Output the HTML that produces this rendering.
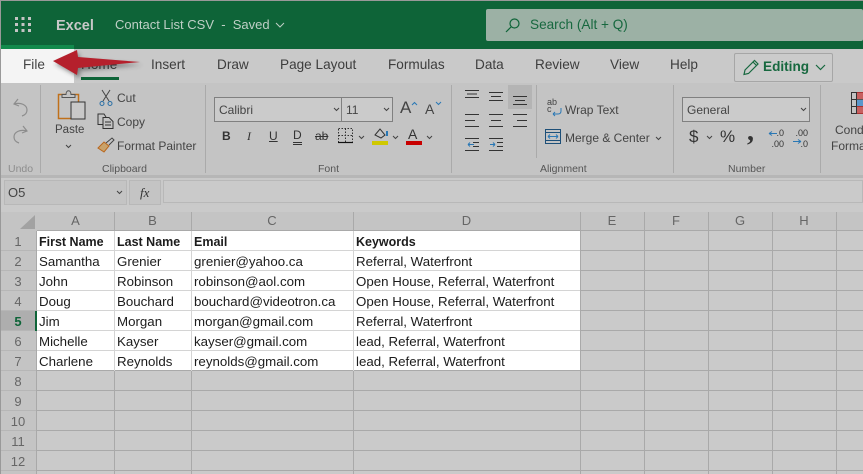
<!DOCTYPE html>
<html><head><meta charset="utf-8"><style>
html,body{margin:0;padding:0}
#p{position:relative;width:863px;height:474px;overflow:hidden;background:#cacaca;font-family:"Liberation Sans",sans-serif;color:#3c3c3c;font-size:12px}
#p div,#p span.a{position:absolute}
.t{position:absolute;white-space:nowrap;line-height:16px}
.tab{font-size:13.6px;top:57px;color:#3d3d3d}
.r{font-size:12px;color:#444}
.g{font-size:10.5px;color:#555;top:161px}
.c{font-size:13.3px;color:#1c1c1c;white-space:nowrap;position:absolute;line-height:20px;margin-top:1px}
.h{font-size:13px;color:#666;position:absolute;text-align:center;line-height:20px}
.n{margin-top:1px}
svg{position:absolute;overflow:visible}
</style></head><body><div id="p">
<div style="left:0;top:0;width:863px;height:1px;background:#999"></div>
<div style="left:0;top:1px;width:1px;height:473px;background:#999;z-index:9"></div>
<div style="left:1px;top:1px;width:862px;height:48px;background:#0e6438"></div>
<svg style="left:15px;top:17px" width="18" height="16" fill="#c4c4c4"><g id="d"><rect x="0" y="0" width="3" height="3"/><rect x="6.500" y="0" width="3" height="3"/><rect x="13" y="0" width="3" height="3"/><rect x="0" y="6" width="3" height="3"/><rect x="6.500" y="6" width="3" height="3"/><rect x="13" y="6" width="3" height="3"/><rect x="0" y="12" width="3" height="3"/><rect x="6.500" y="12" width="3" height="3"/><rect x="13" y="12" width="3" height="3"/></g></svg>
<span class="t" style="left:56px;top:18px;font-size:14.5px;font-weight:bold;color:#c8c8c8">Excel</span>
<span class="t" style="left:115px;top:17px;font-size:13px;color:#bfcfc6">Contact List CSV&nbsp; -&nbsp; Saved</span>
<svg style="left:275px;top:22px" width="10" height="7" fill="none" stroke="#bfcfc6"><path d="M1 1l4 4 4-4"/></svg>
<div style="left:486px;top:9px;width:377px;height:32px;background:#9cb1a5;border-radius:2px"></div>
<svg style="left:505px;top:17px" width="16" height="16" fill="none" stroke="#0e6438" stroke-width="1.200"><circle cx="9.500" cy="6.500" r="4.500"/><path d="M6 10l-5 5"/></svg>
<span class="t" style="left:530px;top:17px;font-size:13.6px;color:#17683f">Search (Alt + Q)</span>

<div style="left:1px;top:49px;width:862px;height:34px;background:#c9c9c9"></div>
<div style="left:1px;top:45px;width:73px;height:4px;background:#128a4c"></div>
<div style="left:1px;top:49px;width:73px;height:34px;background:#f4f4f4"></div>
<span class="t tab" style="left:23px;color:#444">File</span>
<span class="t tab" style="left:81px;color:#333">Home</span>
<div style="left:81px;top:77px;width:38px;height:3px;background:#0e6438"></div>
<span class="t tab" style="left:151px">Insert</span>
<span class="t tab" style="left:217px">Draw</span>
<span class="t tab" style="left:280px">Page Layout</span>
<span class="t tab" style="left:388px">Formulas</span>
<span class="t tab" style="left:475px">Data</span>
<span class="t tab" style="left:535px">Review</span>
<span class="t tab" style="left:610px">View</span>
<span class="t tab" style="left:670px">Help</span>
<div style="left:734px;top:53px;width:97px;height:27px;border:1px solid #a6a6a6;border-radius:2px;background:#cbcbcb"></div>
<svg style="left:743px;top:59px" width="17" height="17" fill="none" stroke="#17683f" stroke-width="1.200"><path d="M1 15.500l1-4.500L11.500 1.500l3.500 3.500L5.500 14.500zM10 3l3.500 3.500"/></svg>
<span class="t" style="left:763px;top:59px;font-size:13.6px;font-weight:bold;color:#17683f">Editing</span>
<svg style="left:815px;top:64px" width="11" height="7" fill="none" stroke="#17683f" stroke-width="1.200"><path d="M1 1l4.500 4.500L10 1"/></svg>

<div style="left:1px;top:83px;width:862px;height:92px;background:#c4c4c4"></div>
<div style="left:1px;top:175px;width:862px;height:3px;background:#b6b6b6"></div>
<div style="left:1px;top:178px;width:862px;height:27px;background:#c9c9c9"></div>
<div style="left:40px;top:85px;width:1px;height:88px;background:#aaa"></div>
<div style="left:205px;top:85px;width:1px;height:88px;background:#aaa"></div>
<div style="left:451px;top:85px;width:1px;height:88px;background:#aaa"></div>
<div style="left:536px;top:85px;width:1px;height:73px;background:#aaa"></div>
<div style="left:673px;top:85px;width:1px;height:88px;background:#aaa"></div>
<div style="left:820px;top:85px;width:1px;height:88px;background:#aaa"></div>

<svg style="left:12px;top:98px" width="18" height="50" fill="none" stroke="#8d8d8d" stroke-width="1.200"><path d="M6 1L2 6l5 2M2 6c7-2 13 1 13 6 0 3-2 5-5 6"/><path d="M11 28l4 5-5 2M15 33c-7-2-13 1-13 6 0 3 2 5 5 6"/></svg>
<span class="t g" style="left:8px;color:#8d8d8d">Undo</span>

<svg style="left:57px;top:89px" width="30" height="32" fill="none"><path d="M1.500 5.500h20v24H1.500z" stroke="#c0701a" stroke-width="1.500"/><path d="M5 5.500h4c0-5 5-5 5 0h4v3H5z" fill="#c4c4c4" stroke="#555"/><path d="M14 13h14v17H14z" fill="#c8c8c8" stroke="#333"/></svg>
<span class="t r" style="left:55px;top:122px;font-size:11.5px">Paste</span>
<svg style="left:65px;top:144px" width="7" height="5" fill="none" stroke="#444"><path d="M1 1l2.500 2.500L6 1"/></svg>
<svg style="left:99px;top:89px" width="14" height="18" fill="none" stroke="#444"><path d="M3 1l7 11M11 1L4 12"/><circle cx="3" cy="14.500" r="2" stroke="#2a6fa5"/><circle cx="11" cy="14.500" r="2" stroke="#2a6fa5"/></svg>
<span class="t r" style="left:117px;top:90px">Cut</span>
<svg style="left:97px;top:113px" width="18" height="16" fill="none" stroke="#333"><path d="M6 11.500H1V1h6l2 3"/><path d="M6 4.500h6l4 4v7H6zM8 9h6M8 12h6"/></svg>
<span class="t r" style="left:117px;top:114px">Copy</span>
<svg style="left:97px;top:137px" width="18" height="16" fill="none"><path d="M1 11l6-6 5 4-5 6z" fill="#c9a26a" stroke="#b9661c"/><path d="M9 6l6-5 2 2-5 5" stroke="#444"/></svg>
<span class="t r" style="left:117px;top:138px">Format Painter</span>
<span class="t g" style="left:102px">Clipboard</span>

<div style="left:214px;top:97px;width:177px;height:23px;border:1px solid #808080;background:#cbcbcb"></div>
<div style="left:341px;top:97px;width:1px;height:24px;background:#808080"></div>
<span class="t r" style="left:219px;top:102px">Calibri</span>
<span class="t r" style="left:346px;top:102px">11</span>
<svg style="left:333px;top:107px" width="60" height="6" fill="none" stroke="#444"><path d="M1 1l2.500 2.500L6 1M51 1l2.500 2.500L56 1"/></svg>
<span class="t" style="left:400px;top:100px;font-size:17px;color:#444">A</span>
<span class="t" style="left:425px;top:101px;font-size:14px;color:#444">A</span>
<svg style="left:411px;top:101px" width="30" height="6" fill="none" stroke="#2a78b5"><path d="M1 4l2.500-2.500L6 4M25 1l2.500 2.500L30 1"/></svg>
<span class="t" style="left:222px;top:128px;font-weight:bold;color:#333">B</span>
<span class="t" style="left:247px;top:128px;font-family:'Liberation Serif',serif;font-style:italic;color:#333">I</span>
<span class="t" style="left:269px;top:128px;text-decoration:underline;color:#333">U</span>
<span class="t" style="left:293px;top:128px;color:#333;border-bottom:3px double #333;line-height:14px">D</span>
<span class="t" style="left:315px;top:128px;text-decoration:line-through;color:#333">ab</span>
<svg style="left:338px;top:128px" width="15" height="16" fill="none" stroke="#333"><path d="M.5.5h14v14H.5zM7.500.5v14M.5 7.500h14" stroke-dasharray="1.500 1.500"/><path d="M0 14.500h15" stroke="#111" stroke-width="1.200"/></svg>
<svg style="left:358px;top:135px" width="8" height="5" fill="none" stroke="#444"><path d="M1 1l2.500 2.500L6 1"/></svg>
<svg style="left:374px;top:128px" width="15" height="12" fill="none" stroke="#333"><path d="M1 7l5-6 5 6-4 3z"/><path d="M13 3v5" stroke="#2a78b5" stroke-width="2"/></svg>
<div style="left:372px;top:141px;width:16px;height:4px;background:#cfc800"></div>
<svg style="left:392px;top:135px" width="8" height="5" fill="none" stroke="#444"><path d="M1 1l2.500 2.500L6 1"/></svg>
<span class="t" style="left:408px;top:126px;font-size:14px;color:#333">A</span>
<div style="left:406px;top:141px;width:16px;height:4px;background:#c80000"></div>
<svg style="left:426px;top:135px" width="8" height="5" fill="none" stroke="#444"><path d="M1 1l2.500 2.500L6 1"/></svg>
<span class="t g" style="left:318px">Font</span>

<div style="left:508px;top:85px;width:24px;height:24px;background:#b4b4b4"></div>
<svg style="left:465px;top:90px" width="62" height="66" fill="none" stroke="#333"><path d="M0 .5h14M2 4h10M0 7.500h14M24 2.500h14M26 6.500h10M24 10.500h14M48 6.500h14M50 10.500h10M48 14.500h14M0 24.500h14M0 30.500h10M0 36.500h14M24 24.500h14M26 30.500h10M24 36.500h14M48 24.500h14M52 30.500h10M48 36.500h14M0 48.500h14M8 52.500h6M8 56.500h6M0 60.500h14M24 48.500h14M32 52.500h6M32 56.500h6M24 60.500h14"/><path d="M3 54.500h6M3 54.500l2-2M3 54.500l2 2M25 54.500h5M30 54.500l-2-2M30 54.500l-2 2" stroke="#2a78b5"/></svg>
<span class="t g" style="left:540px;color:#555">Alignment</span>

<svg style="left:547px;top:100px" width="16" height="18" fill="none" stroke="#2a78b5"><path d="M14 8v3c0 2-1 3-3 3H6M6 14l2-2M6 14l2 2"/></svg>
<span class="t" style="left:547px;top:99px;font-size:9px;line-height:7px;color:#444;white-space:normal;width:12px">ab<br>c</span>
<span class="t r" style="left:565px;top:102px">Wrap Text</span>
<svg style="left:545px;top:129px" width="16" height="15" fill="none" stroke="#1d4f78"><path d="M.5.500h15v14H.5zM.5 3.500h15M.5 11.500h15"/><path d="M3 7.500h10M3 7.500l2-2M3 7.500l2 2M13 7.500l-2-2M13 7.500l-2 2" stroke="#2a78b5"/></svg>
<span class="t r" style="left:565px;top:130px">Merge &amp; Center</span>
<svg style="left:655px;top:136px" width="8" height="5" fill="none" stroke="#444"><path d="M1 1l2.500 2.500L6 1"/></svg>

<div style="left:682px;top:97px;width:126px;height:23px;border:1px solid #808080;background:#cbcbcb"></div>
<span class="t r" style="left:687px;top:102px">General</span>
<svg style="left:800px;top:107px" width="8" height="5" fill="none" stroke="#444"><path d="M1 1l2.500 2.500L6 1"/></svg>
<span class="t" style="left:689px;top:129px;font-size:17px;color:#333">$</span>
<svg style="left:706px;top:135px" width="8" height="5" fill="none" stroke="#444"><path d="M1 1l2.500 2.500L6 1"/></svg>
<span class="t" style="left:720px;top:129px;font-size:17px;color:#333">%</span>
<span class="t" style="left:747px;top:124px;font-size:28px;font-weight:bold;color:#333;font-family:'Liberation Serif',serif">,</span>
<span class="t" style="left:769px;top:128px;font-size:9px;line-height:11px;color:#333;text-align:right;width:15px">.0<br>.00</span>
<span class="t" style="left:794px;top:128px;font-size:9px;line-height:11px;color:#333;text-align:right;width:14px">.00<br>.0</span>
<svg style="left:768px;top:131px" width="44" height="14" fill="none" stroke="#2a78b5"><path d="M1 2.500h8M1 2.500l3-2M1 2.500l3 2M25 10.500h8M33 10.500l-3-2M33 10.500l-3 2"/></svg>
<span class="t g" style="left:728px">Number</span>

<svg style="left:851px;top:92px" width="12" height="22" fill="none" stroke="#333"><rect x="5.500" y=".500" width="7" height="21" fill="#c9c9c9"/><rect x="5.500" y=".500" width="7" height="7" fill="#c86060" stroke="#a33"/><rect x="5.500" y="7.500" width="7" height="7" fill="#5a97cc" stroke="#555"/><rect x="5.500" y="14.500" width="7" height="7" fill="#c86060" stroke="#a33"/><path d="M.5.500h5v21h-5zM.5 7.500h5M.5 14.500h5"/></svg>
<span class="t r" style="left:835px;top:122px">Cond</span>
<span class="t r" style="left:831px;top:138px">Forma</span>

<div style="left:4px;top:180px;width:121px;height:23px;background:#c4c4c4;border:1px solid #b8b8b8"></div>
<span class="t" style="left:8px;top:185px;font-size:13px;color:#444">O5</span>
<svg style="left:116px;top:190px" width="8" height="5" fill="none" stroke="#444"><path d="M1 1l2.500 2.500L6 1"/></svg>
<div style="left:129px;top:180px;width:30px;height:23px;background:#c4c4c4;border:1px solid #b8b8b8"></div>
<span class="t" style="left:140px;top:185px;font-size:13px;font-style:italic;font-family:'Liberation Serif',serif;color:#333">fx</span>
<div style="left:163px;top:180px;width:700px;height:23px;background:#cacaca;border:1px solid #b8b8b8;box-sizing:border-box"></div>

<div style="left:1px;top:212px;width:862px;height:19px;background:#c4c4c4"></div>
<div style="left:1px;top:231px;width:36px;height:243px;background:#c4c4c4"></div>
<svg style="left:18px;top:212px" width="18" height="18"><path d="M17 3v14H2z" fill="#a2a2a2"/></svg>

<div style="left:37px;top:231px;width:543px;height:140px;background:#fff"></div>

<svg style="left:0;top:0" width="863" height="474" shape-rendering="crispEdges">
<g stroke="#a9a9a9" fill="none">
<path d="M36.500 231v243M114.500 212v19M191.500 212v19M353.500 212v19M580.500 212v262M644.500 212v262M708.500 212v262M772.500 212v262M836.500 212v262M114.500 371v103M191.500 371v103M353.500 371v103"/>
<path d="M37 230.500h826M37 370.500h826M37 390.500h826M37 410.500h826M37 430.500h826M37 450.500h826M37 470.500h826M580 250.500h283M580 270.500h283M580 290.500h283M580 310.500h283M580 330.500h283M580 350.500h283"/>
</g>
<g stroke="#d4d4d4" fill="none">
<path d="M114.500 231v140M191.500 231v140M353.500 231v140M37 250.500h543M37 270.500h543M37 290.500h543M37 310.500h543M37 330.500h543M37 350.500h543"/>
</g>
<g stroke="#b6b6b6" fill="none"><path d="M1 250.500h35M1 270.500h35M1 290.500h35M1 310.500h35M1 330.500h35M1 350.500h35M1 370.500h35M1 390.500h35M1 410.500h35M1 430.500h35M1 450.500h35M1 470.500h35"/></g>
</svg>
<div style="left:1px;top:311px;width:35px;height:19px;background:#aeaeae"></div>
<div style="left:35px;top:311px;width:2px;height:20px;background:#0e6438"></div>

<span class="h" style="left:37px;top:211px;width:77px">A</span>
<span class="h" style="left:114px;top:211px;width:77px">B</span>
<span class="h" style="left:191px;top:211px;width:162px">C</span>
<span class="h" style="left:353px;top:211px;width:227px">D</span>
<span class="h" style="left:580px;top:211px;width:64px">E</span>
<span class="h" style="left:644px;top:211px;width:64px">F</span>
<span class="h" style="left:708px;top:211px;width:64px">G</span>
<span class="h" style="left:772px;top:211px;width:64px">H</span>

<span class="h n" style="left:1px;top:231px;width:34px">1</span>
<span class="h n" style="left:1px;top:251px;width:34px">2</span>
<span class="h n" style="left:1px;top:271px;width:34px">3</span>
<span class="h n" style="left:1px;top:291px;width:34px">4</span>
<span class="h n" style="left:1px;top:311px;width:34px;color:#0e6438;font-weight:bold">5</span>
<span class="h n" style="left:1px;top:331px;width:34px">6</span>
<span class="h n" style="left:1px;top:351px;width:34px">7</span>
<span class="h n" style="left:1px;top:371px;width:34px">8</span>
<span class="h n" style="left:1px;top:391px;width:34px">9</span>
<span class="h n" style="left:1px;top:411px;width:34px">10</span>
<span class="h n" style="left:1px;top:431px;width:34px">11</span>
<span class="h n" style="left:1px;top:451px;width:34px">12</span>

<span class="c" style="left:39px;top:231px;font-weight:bold;font-size:12.5px">First Name</span>
<span class="c" style="left:117px;top:231px;font-weight:bold;font-size:12.5px">Last Name</span>
<span class="c" style="left:194px;top:231px;font-weight:bold;font-size:12.5px">Email</span>
<span class="c" style="left:356px;top:231px;font-weight:bold;font-size:12.5px">Keywords</span>
<span class="c" style="left:39px;top:251px">Samantha</span><span class="c" style="left:117px;top:251px">Grenier</span><span class="c" style="left:194px;top:251px">grenier@yahoo.ca</span><span class="c" style="left:356px;top:251px">Referral, Waterfront</span>
<span class="c" style="left:39px;top:271px">John</span><span class="c" style="left:117px;top:271px">Robinson</span><span class="c" style="left:194px;top:271px">robinson@aol.com</span><span class="c" style="left:356px;top:271px">Open House, Referral, Waterfront</span>
<span class="c" style="left:39px;top:291px">Doug</span><span class="c" style="left:117px;top:291px">Bouchard</span><span class="c" style="left:194px;top:291px">bouchard@videotron.ca</span><span class="c" style="left:356px;top:291px">Open House, Referral, Waterfront</span>
<span class="c" style="left:39px;top:311px">Jim</span><span class="c" style="left:117px;top:311px">Morgan</span><span class="c" style="left:194px;top:311px">morgan@gmail.com</span><span class="c" style="left:356px;top:311px">Referral, Waterfront</span>
<span class="c" style="left:39px;top:331px">Michelle</span><span class="c" style="left:117px;top:331px">Kayser</span><span class="c" style="left:194px;top:331px">kayser@gmail.com</span><span class="c" style="left:356px;top:331px">lead, Referral, Waterfront</span>
<span class="c" style="left:39px;top:351px">Charlene</span><span class="c" style="left:117px;top:351px">Reynolds</span><span class="c" style="left:194px;top:351px">reynolds@gmail.com</span><span class="c" style="left:356px;top:351px">lead, Referral, Waterfront</span>

<svg style="left:0;top:0;z-index:5" width="863" height="474"><defs><filter id="s" x="-20%" y="-50%" width="140%" height="200%"><feGaussianBlur stdDeviation="2"/></filter></defs><path d="M53 61l24-11 1 7 62 5-62 6 0 7z" fill="#333" opacity=".5" filter="url(#s)" transform="translate(2 3)"/><path d="M53 61l24-11 1 7 62 5-62 6-1 7z" fill="#b5202c"/></svg>
</div></body></html>
